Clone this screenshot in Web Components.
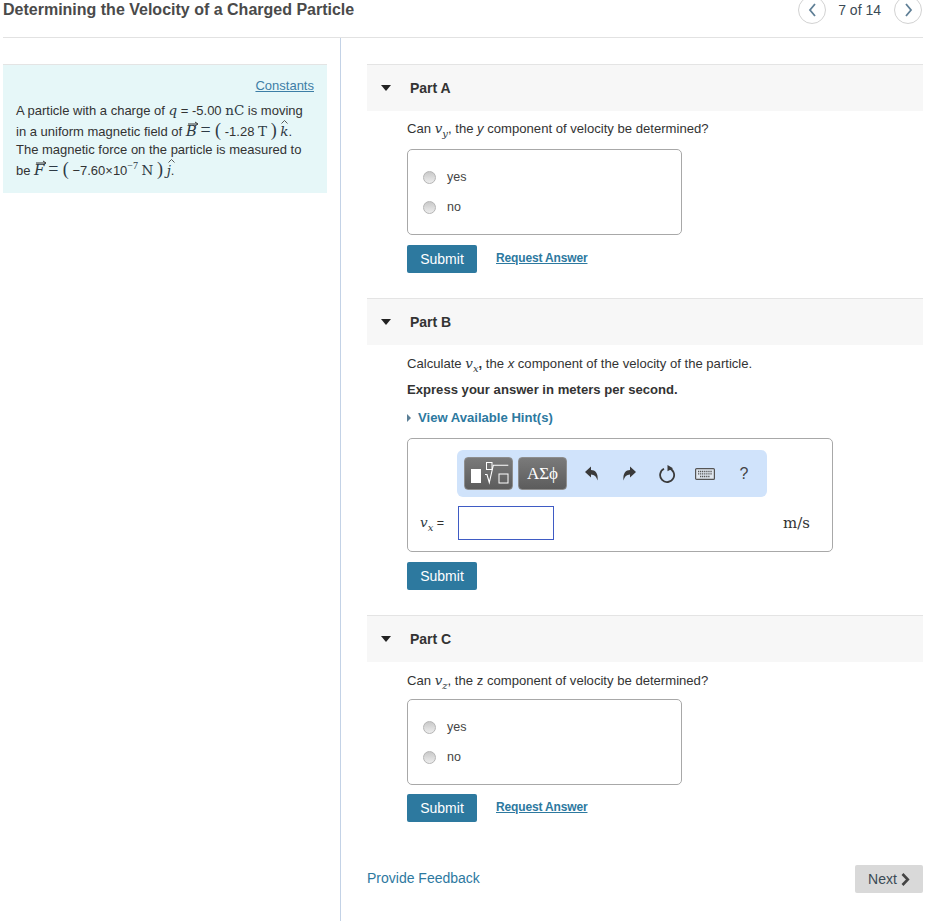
<!DOCTYPE html>
<html lang="en">
<head>
<meta charset="utf-8">
<title>Determining the Velocity of a Charged Particle</title>
<style>
  html, body { margin: 0; padding: 0; background: #fff; }
  body { font: 13.1px/20px "Liberation Sans", Arial, sans-serif; color: #333; }
</style>
</head>
<body>
<mp-page>
  <mp-header slot="header" title-text="Determining the Velocity of a Charged Particle" position="7 of 14"></mp-header>
  <mp-sidebar slot="side">
    <mp-line>A particle with a charge of <mp-math>q</mp-math> = -5.00 <mp-math cm>nC</mp-math> is moving</mp-line>
    <mp-line>in a uniform magnetic field of <mp-math mark="arrow" cap>B</mp-math> <mp-math upright big>= (</mp-math> -1.28 <mp-math cm>T</mp-math> <mp-math upright big>)</mp-math> <mp-math mark="hat">k</mp-math>.</mp-line>
    <mp-line>The magnetic force on the particle is measured to</mp-line>
    <mp-line>be <mp-math mark="arrow" cap>F</mp-math> <mp-math upright big>= (</mp-math> &minus;7.60&times;10<mp-math upright sup="&minus;7"></mp-math> <mp-math cm>N</mp-math> <mp-math upright big>)</mp-math> <mp-math mark="hat">j</mp-math>.</mp-line>
  </mp-sidebar>

  <mp-part label="Part A">
    <mp-line>Can <mp-math sub="y">v</mp-math>, the <em>y</em> component of velocity be determined?</mp-line>
    <mp-choices gap="10" after="10"></mp-choices>
    <mp-actions request></mp-actions>
  </mp-part>

  <mp-part label="Part B">
    <mp-line gap="1">Calculate <mp-math sub="x">v</mp-math><b>,</b> the <em>x</em> component of the velocity of the particle.</mp-line>
    <mp-line gap="6" strong>Express your answer in meters per second.</mp-line>
    <mp-hint>View Available Hint(s)</mp-hint>
    <mp-answer sub="x" unit="m/s"></mp-answer>
    <mp-actions></mp-actions>
  </mp-part>

  <mp-part label="Part C">
    <mp-line gap="1">Can <mp-math sub="z">v</mp-math>, the z component of velocity be determined?</mp-line>
    <mp-choices gap="8" after="9"></mp-choices>
    <mp-actions request></mp-actions>
  </mp-part>

  <mp-footer></mp-footer>
</mp-page>

<script>
'use strict';

(function () {
  // small helper so each class only has to give its markup
  function shadow(el, html) {
    const root = el.attachShadow({ mode: 'open' });
    root.innerHTML = html;
    return root;
  }

  class MpPage extends HTMLElement {
    constructor() {
      super();
      shadow(this, `
        <style>
          :host { display: block; width: 934px; height: 921px; overflow: hidden; }
          .top { padding: 0 11px 0 3px; }
          .cols { display: flex; height: 883px; }
          .side { width: 341px; box-sizing: border-box; border-right: 1px solid #c3d2e6; padding: 26px 13px 0 3px; flex: none; }
          .main { flex: none; width: 556px; margin-left: 26px; padding-top: 26px; }
        </style>
        <div class="top"><slot name="header"></slot></div>
        <div class="cols">
          <div class="side"><slot name="side"></slot></div>
          <div class="main"><slot></slot></div>
        </div>
      `);
    }
  }

  class MpHeader extends HTMLElement {
    constructor() {
      super();
      const chevron = (d) => `<svg width="9" height="14" viewBox="0 0 9 14"><path d="${d}" fill="none" stroke="#5f7f96" stroke-width="1.8"/></svg>`;
      shadow(this, `
        <style>
          :host { display: flex; justify-content: space-between; height: 37px; border-bottom: 1px solid #e2e2e2; }
          h1 { margin: 0; font: bold 16px/19px "Liberation Sans", Arial, sans-serif; color: #4a4a4a; }
          nav { display: flex; align-items: flex-start; margin-top: -4px; margin-right: 1px; font-size: 14px; line-height: 28px; color: #3b4a55; }
          .round { width: 26px; height: 26px; border: 1px solid #d2d2d2; border-radius: 50%; display: flex; align-items: center; justify-content: center; }
          span { margin: 0 13px 0 12px; }
        </style>
        <h1>${this.getAttribute('title-text')}</h1>
        <nav>
          <div class="round">${chevron('M7 1 L2 7 L7 13')}</div>
          <span>${this.getAttribute('position')}</span>
          <div class="round">${chevron('M2 1 L7 7 L2 13')}</div>
        </nav>
      `);
    }
  }

  class MpSidebar extends HTMLElement {
    constructor() {
      super();
      shadow(this, `
        <style>
          :host { display: block; background: #e6f7f8; border-top: 1px solid #e4e4e4; padding: 11px 13px 14px 13px; height: 103px; font-size: 13px; }
          a { display: block; text-align: right; color: #3d7ea6; text-decoration: underline; line-height: 20px; margin-bottom: 6px; }
          ::slotted(mp-line) { line-height: 18.5px; }
        </style>
        <a>Constants</a>
        <slot></slot>
      `);
    }
  }

  class MpLine extends HTMLElement {
    constructor() {
      super();
      const gap = this.getAttribute('gap') || 0;
      const weight = this.hasAttribute('strong') ? 'bold' : 'normal';
      shadow(this, `
        <style>
          :host { display: block; margin-top: ${gap}px; font-weight: ${weight}; white-space: nowrap; }
        </style>
        <slot></slot>
      `);
    }
  }

  class MpMath extends HTMLElement {
    constructor() {
      super();
      const cm = this.hasAttribute('cm');
      const upright = this.hasAttribute('upright') || cm;
      const size = this.hasAttribute('big') ? 18 : this.hasAttribute('cap') ? 15 : cm ? 13.5 : upright ? 14 : 13.5;
      const family = upright && !cm ? '"Liberation Serif", serif' : '"DejaVu Serif", "Liberation Serif", serif';
      const sub = this.getAttribute('sub');
      const sup = this.getAttribute('sup');
      const mark = this.getAttribute('mark');
      const markup = mark === 'arrow'
        ? '<svg class="mark" style="top:-3px;left:2px" width="11" height="6" viewBox="0 0 11 6"><path d="M0 3 H9 M7 1 L10 3 L7 5" fill="none" stroke="#333" stroke-width="1"/></svg>'
        : mark === 'hat'
          ? '<svg class="mark" style="top:-5px;left:1px" width="7" height="4" viewBox="0 0 7 4"><path d="M0.5 3.5 L3.5 0.5 L6.5 3.5" fill="none" stroke="#333" stroke-width="0.8"/></svg>'
          : '';
      shadow(this, `
        <style>
          :host { display: inline-block; position: relative; line-height: 1; font-family: ${family};
            font-style: ${upright ? 'normal' : 'italic'}; font-size: ${size}px; color: #2d3a45; letter-spacing: 0; }
          sub, sup { font-size: 10px; line-height: 0; }
          .mark { position: absolute; }
        </style>
        ${markup}<slot></slot>${sub ? `<sub>${sub}</sub>` : ''}${sup ? `<sup>${sup}</sup>` : ''}
      `);
    }
  }

  class MpPart extends HTMLElement {
    constructor() {
      super();
      shadow(this, `
        <style>
          :host { display: block; margin-bottom: 25px; }
          .bar { height: 47px; box-sizing: border-box; border-top: 1px solid #e4e4e4; background: #f7f7f7; display: flex; align-items: center; color: #333; font-size: 14px; font-weight: bold; }
          .tri { width: 0; height: 0; border: 5.5px solid transparent; border-top: 6px solid #222; border-bottom: 0; margin: 0 19px 0 14px; }
          .body { padding: 8px 0 0 40px; }
        </style>
        <div class="bar"><div class="tri"></div><div>${this.getAttribute('label')}</div></div>
        <div class="body"><slot></slot></div>
      `);
    }
  }

  class MpChoices extends HTMLElement {
    constructor() {
      super();
      const radio = (label) => `<div class="row"><div class="dot"></div><span>${label}</span></div>`;
      shadow(this, `
        <style>
          :host { display: block; box-sizing: border-box; width: 275px; height: 86px; margin: ${this.getAttribute('gap')}px 0 ${this.getAttribute('after')}px; border: 1px solid #a8a8a8; border-radius: 5px; padding: 12px 0 0 15px; }
          .row { display: flex; align-items: center; height: 30px; font-size: 12.5px; color: #444; }
          .dot { box-sizing: border-box; width: 13px; height: 13px; border-radius: 50%; border: 1px solid #b5b5b5; background: linear-gradient(#c9c9c9, #ededed); margin-right: 11px; }
        </style>
        ${radio('yes')}${radio('no')}
      `);
    }
  }

  class MpActions extends HTMLElement {
    constructor() {
      super();
      shadow(this, `
        <style>
          :host { display: flex; align-items: flex-start; }
          button { width: 70px; height: 28px; border: 0; border-radius: 2px; background: #2d799f; color: #fff; font: 14px "Liberation Sans", Arial, sans-serif; padding: 0; }
          a { margin: 3px 0 0 19px; font-size: 12px; letter-spacing: -0.15px; font-weight: bold; color: #2d799f; text-decoration: underline; line-height: 20px; }
        </style>
        <button>Submit</button>
        ${this.hasAttribute('request') ? '<a>Request Answer</a>' : ''}
      `);
    }
  }

  class MpHint extends HTMLElement {
    constructor() {
      super();
      shadow(this, `
        <style>
          :host { display: flex; align-items: center; margin-top: 8px; color: #2d799f; font-weight: bold; }
          i { width: 0; height: 0; border: 4px solid transparent; border-left: 4px solid #5b7f96; border-right: 0; margin: 0 7px 0 0; }
        </style>
        <i></i><slot></slot>
      `);
    }
  }

  class MpToolbar extends HTMLElement {
    constructor() {
      super();
      shadow(this, `
        <style>
          :host { display: flex; align-items: center; box-sizing: border-box; width: 310px; height: 47px; margin-left: -1px; padding-left: 7px; background: #d0e3fb; border-radius: 6px; }
          .key { box-sizing: border-box; flex: none; width: 49px; height: 33px; margin-right: 5px; border-radius: 4px; border: 1px solid #8e8e8e;
            background: linear-gradient(#7a7a7a, #5c5c5c); color: #fff; display: flex; align-items: center; justify-content: center; font: 17px "Liberation Serif", serif; }
          .tool { flex: none; display: flex; align-items: center; justify-content: center; width: 38px; }
          .q { font: 16px "Liberation Sans", Arial, sans-serif; color: #444; margin-left: 1px; }
        </style>
        <div class="key">
          <svg width="47" height="31" viewBox="1 1 47 31">
            <rect x="7" y="12" width="10" height="14" fill="#fff"/>
            <rect x="22.5" y="5.5" width="5.5" height="7" fill="none" stroke="#fff" stroke-width="1"/>
            <path d="M21 17.5 H23 L25.3 25.5 L29.3 8.2 H44.3" fill="none" stroke="#fff" stroke-width="1.1"/>
            <rect x="35" y="17" width="9" height="9" fill="none" stroke="#fff" stroke-width="1"/>
          </svg>
        </div>
        <div class="key">&Alpha;&Sigma;&#981;</div>
        <div class="tool"><svg width="15" height="15" viewBox="0 0 15 15"><path d="M1 6 L7 0.5 V4 C11 4 14.5 7 13.5 14.5 C12.5 10.5 10.5 8.5 7 8.5 V11.5 Z" fill="#3a3a3a"/></svg></div>
        <div class="tool"><svg width="15" height="15" viewBox="0 0 15 15"><path d="M14 6 L8 0.5 V4 C4 4 0.5 7 1.5 14.5 C2.5 10.5 4.5 8.5 8 8.5 V11.5 Z" fill="#3a3a3a"/></svg></div>
        <div class="tool"><svg width="18" height="18" viewBox="0 0 18 18"><path d="M6 3.8 A7 7 0 1 0 10.5 3.2" fill="none" stroke="#3a3a3a" stroke-width="1.8"/><path d="M9.5 0 L15 3.3 L9.5 6.2 Z" fill="#3a3a3a"/></svg></div>
        <div class="tool"><svg width="20" height="12" viewBox="0 0 20 12"><rect x="0.6" y="0.6" width="18.8" height="10.8" rx="1" fill="#dfe6ee" stroke="#555" stroke-width="1.2"/><path d="M3 3.5 H17 M3 5.8 H17 M5 8.5 H15" stroke="#555" stroke-width="1.3" stroke-dasharray="1.2 0.7"/></svg></div>
        <div class="tool q">?</div>
      `);
    }
  }

  class MpAnswer extends HTMLElement {
    constructor() {
      super();
      shadow(this, `
        <style>
          :host { display: block; box-sizing: border-box; width: 426px; height: 114px; margin: 10px 0 10px; border: 1px solid #a8a8a8; border-radius: 5px; padding: 11px 0 0 50px; }
          .row { display: flex; align-items: center; margin: 9px 0 0 -38px; height: 34px; }
          .label { width: 38px; font-size: 12.5px; color: #333; white-space: nowrap; }
          input { box-sizing: border-box; width: 96px; height: 34px; border: 1px solid #3f5bc4; outline: 0; padding: 0; background: #fff; }
          .unit { margin-left: auto; margin-right: 22px; font: 15px "DejaVu Serif", "Liberation Serif", serif; color: #333; }
        </style>
        <mp-toolbar></mp-toolbar>
        <div class="row">
          <div class="label"><mp-math sub="${this.getAttribute('sub')}">v</mp-math> =</div>
          <input type="text" aria-label="answer">
          <div class="unit">${this.getAttribute('unit')}</div>
        </div>
      `);
    }
  }

  class MpFooter extends HTMLElement {
    constructor() {
      super();
      shadow(this, `
        <style>
          :host { display: flex; align-items: center; justify-content: space-between; margin-top: 43px; height: 28px; }
          a { color: #2d799f; font-size: 14px; margin-bottom: 2px; }
          button { width: 68px; height: 28px; border: 0; border-radius: 2px; background: #d9d9d9; color: #3b4a55; font: 14px "Liberation Sans", Arial, sans-serif; padding: 0; display: flex; align-items: center; justify-content: center; gap: 4px; }
        </style>
        <a>Provide Feedback</a>
        <button>Next <svg width="9" height="13" viewBox="0 0 9 13"><path d="M1.5 1 L6.8 6.5 L1.5 12" fill="none" stroke="#444" stroke-width="2.6"/></svg></button>
      `);
    }
  }

  customElements.define('mp-page', MpPage);
  customElements.define('mp-header', MpHeader);
  customElements.define('mp-sidebar', MpSidebar);
  customElements.define('mp-line', MpLine);
  customElements.define('mp-math', MpMath);
  customElements.define('mp-part', MpPart);
  customElements.define('mp-choices', MpChoices);
  customElements.define('mp-actions', MpActions);
  customElements.define('mp-hint', MpHint);
  customElements.define('mp-toolbar', MpToolbar);
  customElements.define('mp-answer', MpAnswer);
  customElements.define('mp-footer', MpFooter);
})();
</script>
</body>
</html>
